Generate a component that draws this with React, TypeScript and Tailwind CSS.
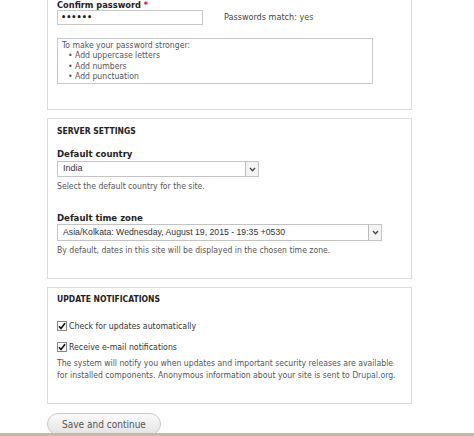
import React from "react";

const Check = () => (
  <span className="inline-flex w-[10px] h-[10px] border border-[#888] bg-white items-center justify-center mr-[2px]">
    <svg width="8" height="8" viewBox="0 0 8 8"><path d="M1 4.2 L3 6.5 L7 1.2" stroke="#111" strokeWidth="1.6" fill="none" /></svg>
  </span>
);

const Arrow = () => (
  <span className="w-[13px] self-stretch border-l border-[#bbb] bg-[#f3f3f3] flex items-center justify-center">
    <svg width="7" height="5" viewBox="0 0 7 5"><path d="M1 1 L3.5 3.8 L6 1" stroke="#444" strokeWidth="1.3" fill="none" /></svg>
  </span>
);

export default function App() {
  const body = { fontFamily: '"DejaVu Sans Condensed", "DejaVu Sans", Verdana, sans-serif' };
  const arial = { fontFamily: '"Liberation Sans", Arial, sans-serif' };
  return (
    <div className="w-[474px] h-[436px] bg-white relative overflow-hidden text-[#333]" style={body}>
      <div className="pl-[47px]">
        {/* top fieldset */}
        <div className="w-[365px] h-[111px] border-x border-b border-[#dcdcdc] pl-[9px]">
          <div className="text-[9.2px] font-bold leading-[11px] text-[#222] mt-[-1px]">
            Confirm password <span className="text-[#e00]">*</span>
          </div>
          <div className="flex items-center mt-[0px]">
            <div className="w-[146px] h-[15px] border border-[#c8c8c8] flex items-center pl-[3px] text-[9px] font-bold text-[#222]">
              ••••••
            </div>
            <div className="ml-[21px] text-[9px] text-[#444]">
              Passwords match: <span className="text-[#3a6b1a]">yes</span>
            </div>
          </div>
          <div className="mt-[13px] w-[316px] h-[46px] border border-[#c9c9c9] pl-[4px] pt-[1px] text-[8.6px] leading-[10.3px] text-[#555]">
            <div>To make your password stronger:</div>
            <div className="pl-[6px]">• Add uppercase letters</div>
            <div className="pl-[6px]">• Add numbers</div>
            <div className="pl-[6px]">• Add punctuation</div>
          </div>
        </div>

        {/* server settings */}
        <div className="mt-[8px] w-[365px] h-[161px] border border-[#dcdcdc] pl-[9px] pt-[6px]">
          <div className="text-[8.5px] font-bold leading-[12px] text-[#222]">SERVER SETTINGS</div>
          <div className="mt-[11px] text-[9.5px] font-bold leading-[12px] text-[#222]">Default country</div>
          <div className="mt-[1px] w-[202px] h-[16px] border border-[#c4c4c4] flex items-center text-[9px] text-[#333]" style={arial}>
            <span className="flex-1 pl-[5px]">India</span>
            <Arrow />
          </div>
          <div className="mt-[3px] text-[8.6px] leading-[12px] text-[#555]">Select the default country for the site.</div>
          <div className="mt-[20px] text-[9.5px] font-bold leading-[12px] text-[#222]">Default time zone</div>
          <div className="mt-[0px] w-[325px] h-[17px] border border-[#c4c4c4] flex items-center text-[8.7px] text-[#333]" style={arial}>
            <span className="flex-1 pl-[5px]">Asia/Kolkata: Wednesday, August 19, 2015 - 19:35 +0530</span>
            <Arrow />
          </div>
          <div className="mt-[3px] text-[8.6px] leading-[12px] text-[#555]">By default, dates in this site will be displayed in the chosen time zone.</div>
        </div>

        {/* update notifications */}
        <div className="mt-[8px] w-[365px] h-[117px] border border-[#dcdcdc] pl-[9px] pt-[5px]">
          <div className="text-[8.5px] font-bold leading-[12px] text-[#222]">UPDATE NOTIFICATIONS</div>
          <div className="mt-[15px] flex items-center text-[8.7px] leading-[12px] text-[#333]"><Check />Check for updates automatically</div>
          <div className="mt-[9px] flex items-center text-[8.7px] leading-[12px] text-[#333]"><Check />Receive e-mail notifications</div>
          <div className="mt-[5px] text-[8.6px] leading-[11.5px] text-[#555] whitespace-nowrap">
            <div>The system will notify you when updates and important security releases are available</div>
            <div>for installed components. Anonymous information about your site is sent to <span className="text-[#2a6aa8]">Drupal.org</span>.</div>
          </div>
        </div>

        <button className="mt-[9px] w-[114px] h-[22px] rounded-full border border-[#c8c8c8] bg-gradient-to-b from-[#fafafa] to-[#e4e4e4] text-[10px] text-[#555]" style={body}>
          Save and continue
        </button>
      </div>
      <div className="absolute left-0 right-0 bottom-0 h-[3px] bg-[#c9b9a2]" />
    </div>
  );
}
